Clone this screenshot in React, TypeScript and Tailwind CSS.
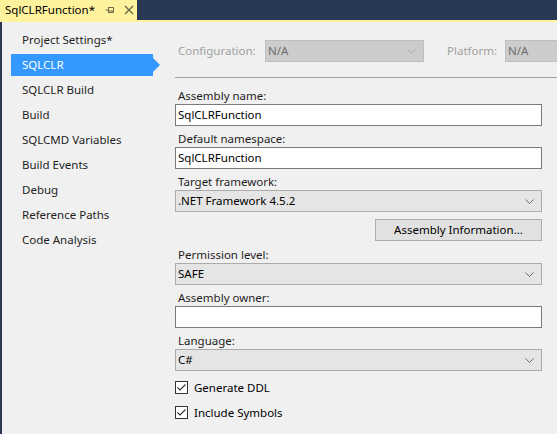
import React from 'react';

const navItems = [
  'Project Settings*',
  'SQLCLR',
  'SQLCLR Build',
  'Build',
  'SQLCMD Variables',
  'Build Events',
  'Debug',
  'Reference Paths',
  'Code Analysis',
];

const Chevron = ({ color = '#6a6a6a' }: { color?: string }) => (
  <svg width="9" height="5" viewBox="0 0 9 5" className="shrink-0">
    <path d="M0.5 0.5 L4.5 4.5 L8.5 0.5" fill="none" stroke={color} strokeWidth="1" />
  </svg>
);

const Label = ({ children }: { children: React.ReactNode }) => (
  <div className="h-[17px] leading-[17px] pl-[3px] text-[#1e1e1e]">{children}</div>
);

const TextBox = ({ value }: { value?: string }) => (
  <div className="h-[22px] border border-[#7a7a7a] bg-white flex items-center pl-[2px] text-black">
    {value}
  </div>
);

const Select = ({ value }: { value: string }) => (
  <div className="h-[22px] border border-[#acacac] bg-[#e5e5e5] flex items-center justify-between pl-[2px] pr-[7px] text-black">
    <span>{value}</span>
    <Chevron />
  </div>
);

const Check = ({ label }: { label: string }) => (
  <div className="h-[25px] flex items-center gap-[6px] text-black">
    <div className="w-[13px] h-[13px] border border-[#333333] bg-white flex items-center justify-center">
      <svg width="11" height="11" viewBox="0 0 11 11">
        <path d="M1.5 5.5 L4 8 L9.5 2.5" fill="none" stroke="#333333" strokeWidth="1.1" />
      </svg>
    </div>
    <span>{label}</span>
  </div>
);

export default function App() {
  return (
    <div
      className="w-[557px] h-[434px] overflow-hidden bg-[#f0f0f0] flex flex-col text-[11.5px]"
      style={{ fontFamily: '"Noto Sans", "Open Sans", sans-serif' }}
    >
      {/* Document tab */}
      <div className="h-[20px] bg-[#293955] flex shrink-0">
        <div className="w-[137px] bg-[#fff29d] flex items-center pl-[5px] text-black">
          <span className="leading-none">SqlCLRFunction*</span>
          <svg width="10" height="10" viewBox="0 0 10 10" className="ml-[10px]">
            <path d="M0.5 5 H3.5 M3.5 2 V8 M3.5 2.5 H8.5 V7.5 H3.5 M3.5 6 H8.5" fill="none" stroke="#6b6a4a" strokeWidth="1" />
          </svg>
          <svg width="10" height="10" viewBox="0 0 10 10" className="ml-[9px]">
            <path d="M1 1 L9 9 M9 1 L1 9" fill="none" stroke="#6b6a4a" strokeWidth="1.4" />
          </svg>
        </div>
      </div>
      <div className="h-[2px] bg-[#fff29d] shrink-0" />

      <div className="flex flex-1 min-h-0 border-l-2 border-[#293955]">
        {/* Sidebar */}
        <div className="w-[173px] shrink-0 pt-[7px] pl-[9px]">
          {navItems.map((item, i) =>
            i === 1 ? (
              <div key={item} className="flex items-center mb-[3px]">
                <div className="w-[142px] h-[22px] bg-[#3399ff] text-white flex items-center pl-[11px]">
                  {item}
                </div>
                <svg width="7" height="14" viewBox="0 0 7 14">
                  <path d="M0 0 L7 7 L0 14 Z" fill="#3399ff" />
                </svg>
              </div>
            ) : (
              <div key={item} className="h-[22px] mb-[3px] flex items-center pl-[11px] text-[#1e1e1e]">
                {item}
              </div>
            )
          )}
        </div>

        {/* Main panel */}
        <div className="flex-1 min-w-0 pt-[18px] pr-[15px]">
          <div className="flex items-center h-[22px] -mr-[15px] overflow-hidden">
            <span className="w-[90px] shrink-0 pl-[3px] text-[#a0a0a0]">Configuration:</span>
            <div className="w-[159px] shrink-0 h-[22px] bg-[#cccccc] border border-[#bfbfbf] flex items-center justify-between pl-[2px] pr-[7px] text-[#6d6d6d]">
              <span>N/A</span>
              <Chevron color="#a8a8a8" />
            </div>
            <span className="ml-[23px] w-[58px] shrink-0 text-[#a0a0a0]">Platform:</span>
            <div className="w-[80px] shrink-0 h-[22px] bg-[#cccccc] border border-[#bfbfbf] flex items-center pl-[2px] text-[#6d6d6d]">
              <span>N/A</span>
            </div>
          </div>

          <div className="h-px bg-[#a0a0a0] mt-[15px] -mr-[15px]" />

          <div className="mt-[9px]">
            <Label>Assembly name:</Label>
            <TextBox value="SqlCLRFunction" />
          </div>
          <div className="mt-[4px]">
            <Label>Default namespace:</Label>
            <TextBox value="SqlCLRFunction" />
          </div>
          <div className="mt-[4px]">
            <Label>Target framework:</Label>
            <Select value=".NET Framework 4.5.2" />
          </div>
          <div className="flex justify-end mt-[7px]">
            <button className="w-[167px] h-[22px] border border-[#adadad] bg-[#e1e1e1] text-black flex items-center justify-center">
              Assembly Information...
            </button>
          </div>
          <div className="mt-[5px]">
            <Label>Permission level:</Label>
            <Select value="SAFE" />
          </div>
          <div className="mt-[4px]">
            <Label>Assembly owner:</Label>
            <TextBox />
          </div>
          <div className="mt-[4px]">
            <Label>Language:</Label>
            <Select value="C#" />
          </div>
          <div className="mt-[4px]">
            <Check label="Generate DDL" />
            <Check label="Include Symbols" />
          </div>
        </div>
      </div>
    </div>
  );
}
